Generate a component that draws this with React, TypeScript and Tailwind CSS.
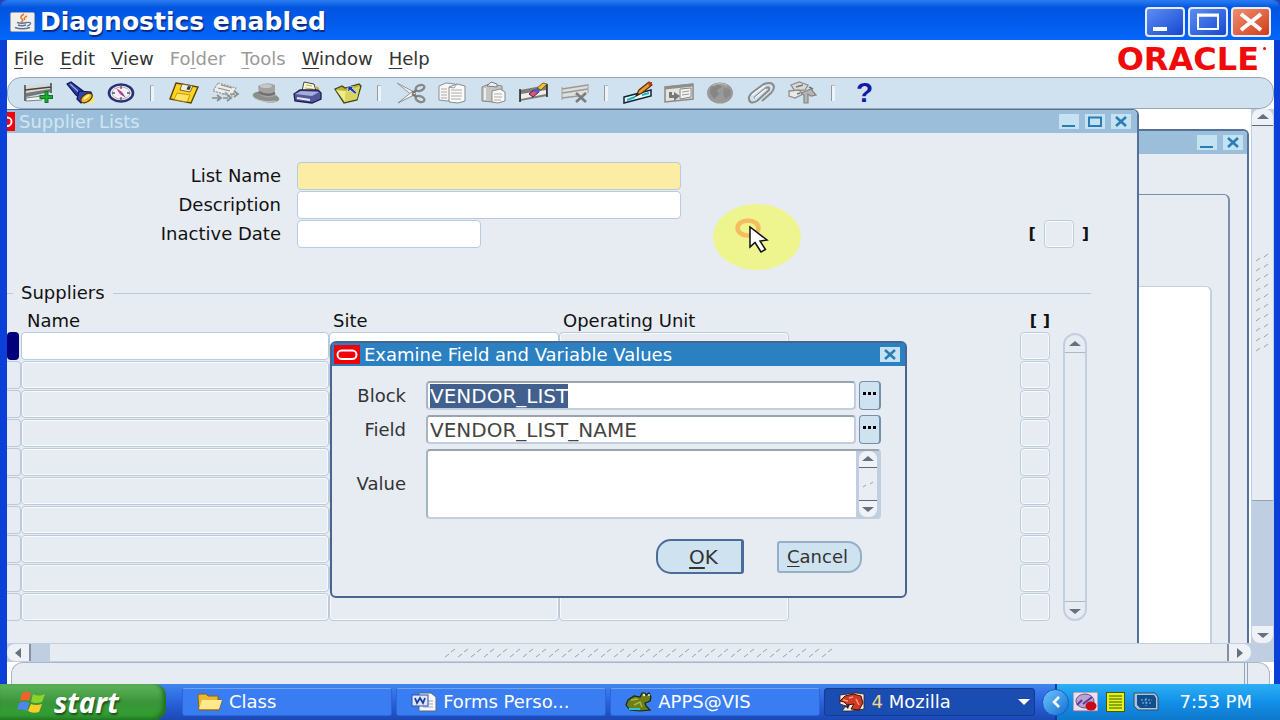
import { useEffect, useRef, type ReactNode } from "react";

const MENUS = [
  { label: "File", key: 0 },
  { label: "Edit", key: 0 },
  { label: "View", key: 0 },
  { label: "Folder", key: 2, disabled: true },
  { label: "Tools", key: 0, disabled: true },
  { label: "Window", key: 0 },
  { label: "Help", key: 0 },
];

const ROWS = Array.from({ length: 10 }, (_, i) => i);

function Mnemonic({ text, at = 0 }: { text: string; at?: number }) {
  return (
    <>
      {text.slice(0, at)}
      <span className="underline underline-offset-3">{text[at]}</span>
      {text.slice(at + 1)}
    </>
  );
}

function Glyph({ children }: { children: ReactNode }) {
  return (
    <svg className="h-6 w-[30px]" viewBox="0 0 30 24" fill="none" aria-hidden>
      {children}
    </svg>
  );
}

const NewIcon = () => (
  <Glyph>
    <path d="M1 5L27 2V11L1 14Z" fill="#d8d8d4" />
    <path d="M1 4V20M27 2V12M1 9L27 6" stroke="#444" strokeWidth="1.5" />
    <path d="M2 12L26 8V11L2 16Z" fill="#777" />
    <path d="M2 17L18 15V19L2 20Z" fill="#f4f4f0" stroke="#666" strokeWidth="0.8" />
    <path d="M22.500 10V22M15.500 16H29" stroke="#0b7a1c" strokeWidth="4" />
    <path d="M22.500 11V21M16.500 16H28" stroke="#1fa832" strokeWidth="2" />
  </Glyph>
);

const FindIcon = () => (
  <Glyph>
    <path d="M22 20L29 15V21L24 23Z" fill="#ffe95a" />
    <path d="M2 3L6 1L18 10L14 16L11 14Z" fill="#2b3fa8" stroke="#101850" strokeWidth="1.2" />
    <path d="M5 3L15 12" stroke="#8ea4ee" strokeWidth="1.5" />
    <path d="M14 10L26 11L27 14L16 22L12 18Z" fill="#2f45b4" stroke="#101850" strokeWidth="1.2" />
    <ellipse cx="21.500" cy="17" rx="6.500" ry="3.800" transform="rotate(-35 21.500 17)" fill="#f2b92d" stroke="#4a3408" strokeWidth="1.2" />
    <path d="M19 18L24 14" stroke="#fff2a8" strokeWidth="2" />
  </Glyph>
);

const NavigatorIcon = () => (
  <Glyph>
    <ellipse cx="15" cy="12" rx="12" ry="8.500" fill="#f4f3fa" stroke="#2c2f78" strokeWidth="2.600" />
    <ellipse cx="15" cy="12" rx="9" ry="6" stroke="#b9a9a4" strokeWidth="1" />
    <path d="M15 5V8M15 16V19M6 12H9M21 12H24" stroke="#555" strokeWidth="1.300" />
    <path d="M10 7L16 11L14 13Z" fill="#e0227c" />
    <path d="M20 17L16 11L14 13Z" fill="#8f3a8c" />
  </Glyph>
);

const SaveIcon = () => (
  <Glyph>
    <path d="M7 2L29 6L22 22L1 18Z" fill="#ffd21e" stroke="#57430a" strokeWidth="1.400" />
    <path d="M13 3L24 5L21 11L11 9Z" fill="#f0efe4" stroke="#6b5a20" strokeWidth="0.900" />
    <path d="M19 5L22 5.500L20.500 9L17.500 8.500Z" fill="#3c3a30" />
    <path d="M8 12L21 14L18 21L5 18.500Z" fill="#ffe465" stroke="#b58a10" strokeWidth="0.800" />
  </Glyph>
);

const NextStepIcon = () => (
  <Glyph>
    <path d="M8 2L26 7L22 15L3 10Z" fill="#eeeeec" stroke="#9a9a98" strokeWidth="1.200" strokeDasharray="2 1" />
    <path d="M8 7L20 10M11 4L22 7" stroke="#8b8b8b" strokeWidth="1.200" />
    <path d="M2 17H9M7 14L11 17L7 20M13 17H18M17 14L21 17L17 20M20 13H25M24 10L28 13L24 16" stroke="#8d8d8d" strokeWidth="1.700" />
    <path d="M12 13H17M15 11L18 13" stroke="#a5a5a5" strokeWidth="1.500" />
  </Glyph>
);

const HatIcon = () => (
  <Glyph>
    <ellipse cx="15" cy="16" rx="13.500" ry="5" transform="rotate(10 15 16)" fill="#8d8d8b" />
    <path d="M8 13L7 5Q15 0 24 4L24 15Q15 19 8 13Z" fill="#a3a3a1" />
    <path d="M8 11Q16 16 24 12" stroke="#6f6f6f" strokeWidth="2.500" />
    <ellipse cx="15" cy="5" rx="6" ry="2" fill="#c6c6c4" />
    <path d="M3 17Q12 22 25 20" stroke="#c4c4c2" />
  </Glyph>
);

const PrintIcon = () => (
  <Glyph>
    <path d="M10 10L12 1L22 3L24 10Z" fill="#fbfae0" stroke="#444" />
    <path d="M14 4L20 5M13 7L21 8" stroke="#c8b040" />
    <path d="M2 13L8 9L26 9L29 12V18L20 22L3 20Z" fill="#54589a" stroke="#1b1d50" strokeWidth="1.300" />
    <path d="M3 13L9 10L27 11L20 15Z" fill="#a8acdc" />
    <path d="M5 17L18 19" stroke="#e8e8f8" strokeWidth="2" />
    <path d="M24 6L27 8" stroke="#d8b020" strokeWidth="2" />
  </Glyph>
);

const CloseFormIcon = () => (
  <Glyph>
    <path d="M2 8L9 5L12 7L26 3L28 5L24 19L11 22Z" fill="#b8b43e" stroke="#45441a" strokeWidth="1.300" />
    <path d="M3 9L13 10L12 21Z" fill="#f0ec8a" />
    <path d="M13 10L27 5L24 18L12 21Z" fill="#d9d462" />
    <path d="M15 5L21 6L19 7L24 12L22 13L17 9L15 11Z" fill="#1534b8" stroke="#fff" strokeWidth="0.500" />
  </Glyph>
);

const CutIcon = () => (
  <Glyph>
    <path d="M1 2L20 12L17 15Z" fill="#f2f2f0" stroke="#999" />
    <path d="M2 22L17 10L20 13Z" fill="#fafafa" stroke="#8e8e8e" />
    <ellipse cx="24" cy="7" rx="4.500" ry="2.700" transform="rotate(-20 24 7)" stroke="#888" strokeWidth="2.400" />
    <ellipse cx="24" cy="18" rx="4.500" ry="2.700" transform="rotate(20 24 18)" stroke="#888" strokeWidth="2.400" />
    <path d="M16 13L21 16M16 12L21 9" stroke="#777" strokeWidth="2.500" />
  </Glyph>
);

const CopyIcon = () => (
  <Glyph>
    <path d="M2 5L9 2L18 3V18L10 20L2 19Z" fill="#f6f6f4" stroke="#8f8f8f" />
    <path d="M12 6L20 3L28 5V20L21 22L12 21Z" fill="#fbfbf9" stroke="#8a8a8a" />
    <path d="M4 8H10M4 11H10M4 14H10M4 17H10M14 9H25M14 12H25M14 15H25M14 18H24" stroke="#aaa" />
    <path d="M12 6L17 7L20 3" stroke="#999" />
  </Glyph>
);

const PasteIcon = () => (
  <Glyph>
    <path d="M4 6L11 3L24 5V19L15 21L4 20Z" fill="#c5c5c3" stroke="#888" />
    <path d="M9 5L13 1L19 3L19 6Z" fill="#eee" stroke="#7f7f7f" />
    <path d="M14 10L22 8L27 11V20L20 22L14 21Z" fill="#fafaf8" stroke="#888" />
    <path d="M16 13H24M16 16H24M16 19H23" stroke="#aaa" />
    <path d="M7 7V19" stroke="#eee" strokeWidth="2" />
  </Glyph>
);

const ClearIcon = () => (
  <Glyph>
    <path d="M1 9L28 4V15L1 20Z" fill="#7d7d7a" />
    <path d="M2 13L27 9V13L2 18Z" fill="#efefea" />
    <path d="M1 8V21M28 3V16" stroke="#222" strokeWidth="1.500" />
    <path d="M10 13L15 9L20 11L14 16Z" fill="#e0507c" stroke="#47204a" />
    <path d="M14 10L18 7L22 9L19 12Z" fill="#4a5dc8" />
    <path d="M18 7L24 2L28 3L22 9Z" fill="#f4c030" stroke="#6b4a08" strokeWidth="0.800" />
  </Glyph>
);

const DeleteIcon = () => (
  <Glyph>
    <path d="M2 7L28 3V14L2 18Z" fill="#dededc" />
    <path d="M2 8L28 4M2 12L28 8M2 17L18 15" stroke="#999" strokeWidth="1.500" />
    <path d="M2 6V19M28 3V12" stroke="#a0a0a0" />
    <path d="M16 12L26 21M26 12L16 21" stroke="#7c7c7c" strokeWidth="2.600" />
  </Glyph>
);

const EditIcon = () => (
  <Glyph>
    <path d="M1 16L28 9V15L1 22Z" fill="#eaf8fa" stroke="#123" strokeWidth="1.500" />
    <path d="M4 19L12 16M19 14L26 12" stroke="#18b4c8" strokeWidth="2" />
    <path d="M13 15L16 9L26 1L29 4L19 12Z" fill="#f09a28" stroke="#5b2c08" strokeWidth="1.200" />
    <path d="M25 1L29 1L29 4L26 5Z" fill="#b83a18" />
    <path d="M12 16L14 12L17 13Z" fill="#222" />
  </Glyph>
);

const ZoomIcon = () => (
  <Glyph>
    <path d="M1 6L29 3V18L1 21Z" fill="#e4e4e1" stroke="#8a8a88" strokeWidth="1.500" />
    <path d="M1 7L29 4" stroke="#8e8e8c" strokeWidth="3" />
    <path d="M16 8L27 7V16L16 18Z" fill="#f3f3f0" stroke="#888" />
    <path d="M18 11L25 10M18 14L25 13" stroke="#999" />
    <path d="M5 11V17H10V20L16 15L10 11V14H8V11Z" fill="#777" />
  </Glyph>
);

const GlobeIcon = () => (
  <Glyph>
    <ellipse cx="15" cy="12" rx="13" ry="10.500" fill="#999997" />
    <path d="M6 6L13 3L17 6L12 9L14 13L9 18L5 12Z" fill="#868685" />
    <path d="M19 7L25 8L26 14L20 18L18 12Z" fill="#8a8a89" />
    <path d="M8 5Q15 0 22 5" stroke="#c0c0be" />
  </Glyph>
);

const AttachIcon = () => (
  <Glyph>
    <path
      d="M8 17L20 7Q24 5 23 9L11 20Q4 24 3 18Q2 15 7 11L18 3Q27 0 28 6Q28 9 25 12L16 20"
      stroke="#8b8b89"
      strokeWidth="2"
    />
    <path d="M9 17L20 8M6 14L18 5" stroke="#fff" strokeWidth="1.200" />
  </Glyph>
);

const FolderToolsIcon = () => (
  <Glyph>
    <path d="M4 4L12 1L21 4L18 9L8 10Z" fill="#d9d9d7" stroke="#8d8d8b" strokeWidth="1.300" />
    <path d="M2 10L12 9L16 13L8 17L2 15Z" fill="#e9e9e7" stroke="#8e8e8c" strokeWidth="1.300" />
    <path d="M14 12L24 8L29 14L24 15L21 13V22H17V14Z" fill="#b5b5b3" stroke="#858583" strokeWidth="1.200" />
    <path d="M9 6L16 4M10 13L13 12M22 6L26 8" stroke="#777" strokeWidth="1.500" />
  </Glyph>
);

const TOOL_GROUPS: { name: string; icon: () => ReactNode }[][] = [
  [
    { name: "New", icon: NewIcon },
    { name: "Find", icon: FindIcon },
    { name: "Show Navigator", icon: NavigatorIcon },
  ],
  [
    { name: "Save", icon: SaveIcon },
    { name: "Next Step", icon: NextStepIcon },
    { name: "Switch Responsibility", icon: HatIcon },
    { name: "Print", icon: PrintIcon },
    { name: "Close Form", icon: CloseFormIcon },
  ],
  [
    { name: "Cut", icon: CutIcon },
    { name: "Copy", icon: CopyIcon },
    { name: "Paste", icon: PasteIcon },
    { name: "Clear Record", icon: ClearIcon },
    { name: "Delete", icon: DeleteIcon },
  ],
  [
    { name: "Edit Field", icon: EditIcon },
    { name: "Zoom", icon: ZoomIcon },
    { name: "Translations", icon: GlobeIcon },
    { name: "Attachments", icon: AttachIcon },
    { name: "Folder Tools", icon: FolderToolsIcon },
  ],
];

function JavaIcon() {
  return (
    <svg className="h-5 w-[25px]" viewBox="0 0 25 20" fill="none" aria-hidden>
      <rect x="0.500" y="0.500" width="24" height="19" rx="1.500" fill="#f0efec" stroke="#a5a7b0" />
      <path d="M14 2Q9 5 12 7Q14 9 11 10M17 4Q13 6 15 8" stroke="#e8792b" strokeWidth="1.600" />
      <path d="M7 10.500Q12 12 17 10.500M8 13Q12 14.500 16 13M5 15.500Q12 18 20 15.500" stroke="#5b7396" strokeWidth="1.400" />
      <path d="M17 10.500Q22 10 20 12.500Q18 14 17 14" stroke="#5b7396" strokeWidth="1.200" />
    </svg>
  );
}

function OracleBadge() {
  return (
    <svg className="h-[19px] w-[26px] shrink-0" viewBox="0 0 26 19" aria-hidden>
      <rect width="26" height="19" fill="#f30008" />
      <rect x="3.500" y="5.500" width="19" height="8.500" rx="4.200" fill="none" stroke="#fff" strokeWidth="2" />
    </svg>
  );
}

function Arrow({ dir }: { dir: "up" | "down" | "left" | "right" }) {
  const d = {
    up: "M0 8L6 3L12 8Z",
    down: "M0 4L6 9L12 4Z",
    left: "M9 1V11L3 6Z",
    right: "M3 1V11L9 6Z",
  }[dir];
  return (
    <svg className="h-3 w-3" viewBox="0 0 12 12" fill="#66707f" aria-hidden>
      <path d={d} />
    </svg>
  );
}

type WinAction = "Minimize" | "Maximize" | "Close";

function InnerButton({ action }: { action: WinAction }) {
  return (
    <button type="button" aria-label={action} className="grid h-[15px] w-5 place-items-center bg-[#c5e2f2]">
      <svg className="h-[13px] w-4" viewBox="0 0 16 13" fill="none" stroke="#2a7cb4" strokeWidth="2" aria-hidden>
        {action === "Minimize" && <path d="M1 11H14" />}
        {action === "Maximize" && <path d="M2 2.500H14V11H2Z" />}
        {action === "Close" && <path d="M3 2L13 11M13 2L3 11" strokeWidth="2.500" />}
      </svg>
    </button>
  );
}

function FrameButton({ action }: { action: WinAction }) {
  return (
    <button
      type="button"
      aria-label={action}
      className={`grid h-[30px] w-10 place-items-center rounded border-2 border-[#e6ecfb] bg-gradient-to-br ${
        action === "Close" ? "from-[#ee8e6c] to-[#cf3a10]" : "from-[#5d8df3] to-[#1746d0]"
      }`}
    >
      <svg className="h-6 w-9" viewBox="0 0 36 24" fill="none" stroke="#fff" aria-hidden>
        {action === "Minimize" && <path d="M6 19H20" strokeWidth="4" />}
        {action === "Maximize" && (
          <>
            <path d="M8 5.500H28V19H8Z" strokeWidth="2" />
            <path d="M7 5H29" strokeWidth="3" />
          </>
        )}
        {action === "Close" && <path d="M8 4L28 20M28 4L8 20" strokeWidth="4" />}
      </svg>
    </button>
  );
}

function TitleBar() {
  return (
    <header className="flex h-10 shrink-0 items-center justify-between rounded-t-lg bg-gradient-to-b from-[#2a7cf2] via-[#0054e0] via-20% to-[#0566fb] pt-1 pr-[9px] pl-[10px]">
      <h1 className="flex items-center gap-[5px] font-['DejaVu_Sans',sans-serif] text-[25px] leading-8 font-bold text-white [text-shadow:1px_2px_1px_#0a2a80]">
        <JavaIcon />
        Diagnostics enabled
      </h1>
      <div className="flex gap-[3px]">
        <FrameButton action="Minimize" />
        <FrameButton action="Maximize" />
        <FrameButton action="Close" />
      </div>
    </header>
  );
}

function MenuBar() {
  return (
    <div className="flex h-[37px] shrink-0 items-center justify-between pr-2 pl-[7px]">
      <nav className="flex gap-4">
        {MENUS.map((m) => (
          <button
            key={m.label}
            type="button"
            disabled={m.disabled}
            className="text-[#333] disabled:text-[#9a9a9a]"
          >
            <Mnemonic text={m.label} at={m.key} />
          </button>
        ))}
      </nav>
      <div className="flex items-start font-['DejaVu_Sans',sans-serif] text-[32px] leading-8 font-bold text-[#f00a0a]">
        ORACLE
        <span className="mt-1 ml-1 size-[3px] rounded-full bg-[#f00a0a]" />
      </div>
    </div>
  );
}

function ToolSeparator() {
  return <span className="mx-[9px] h-4 w-1 border-t border-l border-[#999] border-t-[#bbb] bg-white/60" />;
}

function ToolBar() {
  return (
    <div className="flex h-8 shrink-0 items-center rounded-[14px] border border-[#98a6b4] bg-[#d0e2f0] pl-[10px]">
      {TOOL_GROUPS.map((group, i) => (
        <div key={i} className="flex items-center">
          {group.map(({ name, icon: Icon }) => (
            <button key={name} type="button" aria-label={name} className="grid w-[41px] place-items-center">
              <Icon />
            </button>
          ))}
          <ToolSeparator />
        </div>
      ))}
      <button
        type="button"
        className="w-[41px] text-center font-['Liberation_Sans',sans-serif] text-[28px] leading-7 font-bold text-[#1418a4]"
      >
        ?
      </button>
    </div>
  );
}

const fieldBox = "rounded border border-[#b8cade] bg-white outline-none";
const idleBox =
  "rounded border border-[#bccbdc] bg-[#e7ecf3] shadow-[inset_0_0_0_1px_#f8fbfd] outline-none";

function CheckBox({ label }: { label: string }) {
  return <input type="checkbox" aria-label={label} className={`block h-7 w-[30px] appearance-none ${idleBox}`} />;
}

function HeaderForm() {
  return (
    <div className="flex items-end justify-between pt-[29px] pr-12">
      <div className="grid grid-cols-[274px_1fr] items-center gap-x-4 gap-y-px">
        <label htmlFor="list-name" className="text-right">
          List Name
        </label>
        <input id="list-name" className="h-7 w-[384px] rounded border border-[#b8cade] bg-[#fbeda4] px-1 outline-none" />
        <label htmlFor="description" className="text-right">
          Description
        </label>
        <input id="description" className={`h-7 w-[384px] px-1 ${fieldBox}`} />
        <label htmlFor="inactive" className="text-right">
          Inactive Date
        </label>
        <input id="inactive" className={`h-7 w-[184px] px-1 ${fieldBox}`} />
      </div>
      <div className="flex items-center gap-2 text-base font-bold">
        <span>[</span>
        <CheckBox label="Flexfield" />
        <span>]</span>
      </div>
    </div>
  );
}

function SupplierGrid() {
  return (
    <div className="flex items-end pr-[50px]">
      <table className="h-[310px] flex-1 border-collapse">
        <thead>
          <tr className="h-5 text-left leading-5">
            <td className="w-[14px]" />
            <th className="w-[308px] pl-[6px] font-normal">Name</th>
            <th className="w-[230px] pl-1 font-normal">Site</th>
            <th className="w-[230px] pl-1 font-normal">Operating Unit</th>
            <td />
            <th className="w-[30px] text-right text-base leading-5 font-bold whitespace-nowrap">[ ]</th>
          </tr>
        </thead>
        <tbody>
          {ROWS.map((r) => (
            <tr key={r}>
              <td className="p-0">
                <div
                  className={
                    r === 0
                      ? "h-7 w-3 rounded bg-[#00007c]"
                      : "h-7 w-[14px] rounded-r border border-l-0 border-[#bccbdc]"
                  }
                />
              </td>
              {["Name", "Site", "Operating Unit"].map((col) => (
                <td key={col} className="p-0">
                  <input
                    aria-label={`${col} ${r + 1}`}
                    className={`block h-7 w-full px-1 ${r === 0 && col !== "Operating Unit" ? fieldBox : idleBox}`}
                  />
                </td>
              ))}
              <td />
              <td className="p-0">
                <CheckBox label={`Line flexfield ${r + 1}`} />
              </td>
            </tr>
          ))}
        </tbody>
      </table>
      <div className="ml-[13px] flex h-[288px] w-6 flex-col items-center justify-between rounded-full border-2 border-[#c3cfde]">
        <button type="button" aria-label="Previous record" className="grid h-[18px] w-5 place-items-center border-b border-[#aeb9c8]">
          <Arrow dir="up" />
        </button>
        <button type="button" aria-label="Next record" className="grid h-[18px] w-5 place-items-center border-t border-[#aeb9c8]">
          <Arrow dir="down" />
        </button>
      </div>
    </div>
  );
}

function SupplierWindow() {
  return (
    <section className="absolute inset-y-0 right-[112px] left-0 overflow-hidden rounded-tr-md border-t border-r-2 border-[#54719a] bg-[#e7ecf3]">
      <div className="flex h-[23px] items-center justify-between bg-[#9bbfdb] pr-[6px]">
        <h2 className="flex items-center gap-1 text-[#d3e5f2]">
          <span className="flex w-2 justify-end overflow-hidden">
            <OracleBadge />
          </span>
          Supplier Lists
        </h2>
        <div className="flex gap-[6px]">
          <InnerButton action="Minimize" />
          <InnerButton action="Maximize" />
          <InnerButton action="Close" />
        </div>
      </div>
      <HeaderForm />
      <div className="mt-[33px] flex items-center gap-2 pr-[46px] leading-6">
        <span className="h-px w-[6px] bg-[#b8cade]" />
        <h3>Suppliers</h3>
        <span className="h-px flex-1 bg-[#b8cade]" />
      </div>
      <div className="mt-[6px]">
        <SupplierGrid />
      </div>
    </section>
  );
}

function BackWindow() {
  return (
    <section className="absolute top-[20px] right-[2px] bottom-0 left-16 flex flex-col rounded-tr-md border-t-2 border-r-2 border-[#54719a] bg-[#e7ecf3]">
      <div className="flex h-[23px] shrink-0 items-center justify-end gap-[6px] rounded-tr bg-[#9bbfdb] pr-1">
        <InnerButton action="Minimize" />
        <InnerButton action="Close" />
      </div>
      <div className="mt-10 mr-[17px] flex-1 rounded-tr-md border-t border-r-2 border-[#7890ac] pt-[91px] pr-4">
        <div className="h-full rounded-tr-md border-t border-r-2 border-[#c3d0df] bg-white" />
      </div>
    </section>
  );
}

function LovRow({ id, label, children }: { id: string; label: string; children: ReactNode }) {
  return (
    <>
      <label htmlFor={id} className="text-right text-[#333]">
        {label}
      </label>
      {children}
      <button
        type="button"
        aria-label={`List of values for ${label}`}
        className="grid h-[29px] w-[22px] place-items-center rounded border border-r-2 border-[#7590ae] bg-[#cfe2f0]"
      >
        <span className="flex gap-[2px] pb-1">
          <i className="size-[3px] bg-black" />
          <i className="size-[3px] bg-black" />
          <i className="size-[3px] bg-black" />
        </span>
      </button>
    </>
  );
}

const dialogField =
  "h-[29px] w-full rounded border-2 border-[#c0cedd] border-t-[#99a4b0] border-l-[#a8b4c2] bg-white px-[2px] text-xl leading-6 text-[#444] outline-none selection:bg-[#41608d] selection:text-white";

function ExamineDialog() {
  const blockRef = useRef<HTMLInputElement>(null);

  useEffect(() => {
    blockRef.current?.focus();
    blockRef.current?.select();
  }, []);

  return (
    <section
      role="dialog"
      aria-labelledby="examine-title"
      className="absolute top-[232px] left-[323px] w-[577px] rounded-md border-2 border-[#48658f] bg-[#e7ecf3] pb-[22px]"
    >
      <div className="flex h-[23px] items-center justify-between bg-[#2a80c1] pr-[5px] pl-[2px]">
        <h2 id="examine-title" className="flex items-center gap-1 text-white">
          <OracleBadge />
          Examine Field and Variable Values
        </h2>
        <InnerButton action="Close" />
      </div>
      <div className="grid grid-cols-[74px_430px_22px] items-center gap-y-[5px] pt-[15px] [column-gap:0px]">
        <div className="contents [&>input]:ml-5 [&>button]:ml-[23px]">
          <LovRow id="block" label="Block">
            <input id="block" ref={blockRef} defaultValue="VENDOR_LIST" className={dialogField} />
          </LovRow>
          <LovRow id="field" label="Field">
            <input id="field" defaultValue="VENDOR_LIST_NAME" className={dialogField} />
          </LovRow>
        </div>
        <label htmlFor="value" className="text-right text-[#333]">
          Value
        </label>
        <div className="col-span-2 ml-5 flex h-[70px] w-[455px] rounded border-2 border-[#c0cedd] border-t-[#99a4b0] border-l-[#a8b4c2] bg-white">
          <textarea id="value" className="flex-1 resize-none px-1 outline-none" />
          <div className="flex w-[23px] flex-col items-center bg-[#bfcfe0]">
            <button type="button" aria-label="Scroll up" className="grid h-[17px] w-[18px] place-items-center rounded-t-lg border-b border-[#667] bg-[#eef3f8]">
              <Arrow dir="up" />
            </button>
            <span className="grid w-[18px] flex-1 place-items-center bg-[#e9eef4] text-[#9aa]">
              <svg className="h-2 w-3" viewBox="0 0 12 8" stroke="#98a2ae" aria-hidden>
                <path d="M1 7L4 5M8 4L11 2" />
              </svg>
            </span>
            <button type="button" aria-label="Scroll down" className="grid h-[17px] w-[18px] place-items-center rounded-b-lg border-t border-[#667] bg-[#eef3f8]">
              <Arrow dir="down" />
            </button>
          </div>
        </div>
      </div>
      <div className="mt-5 mr-[43px] flex items-center justify-end gap-[33px] text-[#333]">
        <button
          type="button"
          className="h-[35px] w-[88px] rounded-l-[15px] rounded-r-[3px] border-2 border-r-3 border-[#4d6b98] bg-[#cfe2f0] pl-2 text-xl"
        >
          <Mnemonic text="OK" />
        </button>
        <button
          type="button"
          className="h-8 w-[85px] rounded-l-[3px] rounded-r-[14px] border-2 border-[#95afc6] bg-[#cfe2f0] pr-1"
        >
          <Mnemonic text="Cancel" />
        </button>
      </div>
    </section>
  );
}

function PointerHalo() {
  return (
    <svg className="pointer-events-none absolute top-[94px] left-[705px] h-[68px] w-[90px]" viewBox="0 0 90 68" aria-hidden>
      <ellipse cx="45" cy="34" rx="44" ry="33" fill="#eef48e" />
      <ellipse cx="36" cy="25" rx="10.500" ry="7.500" fill="none" stroke="#f6bc60" strokeWidth="4.500" />
      <path d="M38 24V44L43 39.500L49 49L53.500 46.500L48 38L55 37Z" fill="#fff" stroke="#111" strokeWidth="1.500" />
    </svg>
  );
}

function Grip({ vertical }: { vertical?: boolean }) {
  const dots = Array.from({ length: vertical ? 20 : 60 }, (_, i) => i);
  return (
    <svg className={vertical ? "h-[102px] w-4" : "h-[10px] w-[390px]"} stroke="#98a1ad" aria-hidden>
      {dots.map((i) => {
        const x = vertical ? (i % 2 ? 9 : 1) : 1 + Math.floor(i / 2) * 13 + (i % 2 ? 6 : 0);
        const y = vertical ? 2 + (i >> 1) * 10 + (i % 2 ? 0 : 4) : i % 2 ? 1 : 6;
        return <path key={i} d={`M${x} ${y + 3}L${x + 4} ${y}`} />;
      })}
    </svg>
  );
}

function VerticalScroll() {
  return (
    <div className="flex w-[23px] flex-col items-center bg-[#bfcfe1] px-px">
      <button type="button" aria-label="Scroll up" className="grid h-[17px] w-full place-items-center rounded-t-lg border-b border-[#667] bg-[#eef2f7]">
        <Arrow dir="up" />
      </button>
      <div className="flex w-full flex-[370] items-center justify-center border-b border-[#8fa3b8] bg-[#e7ecf3] pb-5">
        <Grip vertical />
      </div>
      <div className="flex-[130]" />
      <button type="button" aria-label="Scroll down" className="grid h-[17px] w-full place-items-center rounded-b-lg bg-[#eef2f7]">
        <Arrow dir="down" />
      </button>
    </div>
  );
}

function HorizontalScroll() {
  return (
    <div className="flex h-[19px] shrink-0 border-y border-[#c3cfe0] bg-[#bfcfe1] pr-[23px]">
      <button type="button" aria-label="Scroll left" className="grid w-6 place-items-center rounded-l-lg border-r-2 border-[#8890a0] bg-[#eef2f7]">
        <Arrow dir="left" />
      </button>
      <div className="w-[19px]" />
      <div className="grid flex-1 place-items-center bg-[#e7ecf3]">
        <Grip />
      </div>
      <button type="button" aria-label="Scroll right" className="grid w-6 place-items-center rounded-r-lg border-l-2 border-[#8890a0] bg-[#eef2f7]">
        <Arrow dir="right" />
      </button>
    </div>
  );
}

function FlagIcon() {
  return (
    <svg className="h-6 w-[30px]" viewBox="0 0 30 24" aria-hidden>
      <path d="M6 3Q11 0 15 3L13 11Q9 9 4 11Z" fill="#f0622a" />
      <path d="M17 4Q22 7 29 4L26 12Q20 14 15 12Z" fill="#8bd32c" />
      <path d="M3 13Q8 10 13 13L11 21Q6 18 1 20Z" fill="#4f86ee" />
      <path d="M15 14Q20 16 26 14L23 22Q17 24 12 21Z" fill="#fbce27" />
    </svg>
  );
}

function FolderIcon() {
  return (
    <svg className="h-5 w-[26px]" viewBox="0 0 26 20" aria-hidden>
      <path d="M1 4Q1 2 3 2H9L11 4H21V8H25L22 18H2Z" fill="#e9b934" stroke="#8b6310" />
      <path d="M5 8H25L22 17H2Z" fill="#ffe98e" />
    </svg>
  );
}

function WordIcon() {
  return (
    <svg className="h-5 w-[26px]" viewBox="0 0 26 20" fill="none" aria-hidden>
      <path d="M8 1H20L25 5V19H8Z" fill="#f5f7fc" stroke="#59667e" />
      <path d="M12 9H22M12 12H22M12 15H22" stroke="#9aa7c4" />
      <rect x="1" y="3" width="16" height="11" fill="#dfe8fa" stroke="#2c4fa8" />
      <path d="M4 6L6 11L9 6L12 11L14 6" stroke="#1b3d9c" strokeWidth="1.800" />
    </svg>
  );
}

function FrogIcon() {
  return (
    <svg className="h-5 w-[27px]" viewBox="0 0 27 20" aria-hidden>
      <path d="M3 8L9 4L15 5L17 1L20 1L21 3L24 1L26 5L25 9L20 11L21 14L25 18L15 19L5 18L1 13Z" fill="#6b7e1c" stroke="#1c2806" strokeWidth="1.200" />
      <path d="M6 8L13 7M9 13L15 10L17 15" stroke="#a9ba38" strokeWidth="1.500" fill="none" />
      <path d="M4 17H15" stroke="#2cc4d0" strokeWidth="2" />
      <circle cx="19" cy="3" r="1.200" fill="#eee" />
      <circle cx="24" cy="3" r="1" fill="#eee" />
    </svg>
  );
}

function MozillaIcon() {
  return (
    <svg className="h-5 w-[26px]" viewBox="0 0 26 20" aria-hidden>
      <path d="M1 3L17 1L25 2V17L12 19L3 19L7 14L1 12Z" fill="#f4ece8" stroke="#321" strokeWidth="0.800" />
      <path d="M1 9L6 4L14 2L22 4L24 11L20 18L12 17L15 12L8 13L5 10Z" fill="#cf3a22" stroke="#4c0d06" />
      <path d="M10 6L14 5M4 8L9 9M17 7L20 13" stroke="#ff9a78" strokeWidth="1.500" />
      <path d="M6 14L11 12L9 17Z" fill="#222" />
    </svg>
  );
}

function TaskButton({ icon, children, active }: { icon: ReactNode; children: ReactNode; active?: boolean }) {
  return (
    <button
      type="button"
      className={`flex h-7 flex-1 items-center gap-[6px] rounded-[3px] border pl-[14px] whitespace-nowrap text-white ${
        active ? "border-[#113c92] bg-[#1a4cb2]" : "border-[#2c66d8] border-t-[#6fa3fa] bg-[#3a7df2]"
      }`}
    >
      {icon}
      {children}
    </button>
  );
}

function Taskbar() {
  return (
    <footer className="relative flex h-9 shrink-0 items-center bg-gradient-to-b from-[#3f86ee] via-[#2a62dc] to-[#1c48b4]">
      <button
        type="button"
        className="mr-4 flex h-9 w-[166px] items-center gap-2 rounded-r-xl bg-gradient-to-b from-[#5fb45c] via-[#3b953a] to-[#2fa02f] pl-4 font-['Noto_Sans',sans-serif] text-[28px] leading-8 font-bold text-white italic shadow-[inset_-3px_-2px_4px_#1f6e20] [text-shadow:1px_2px_2px_#1b4a1b]"
      >
        <FlagIcon />
        start
      </button>
      <div className="flex flex-1 gap-1">
        <TaskButton icon={<FolderIcon />}>Class</TaskButton>
        <TaskButton icon={<WordIcon />}>Forms Perso...</TaskButton>
        <TaskButton icon={<FrogIcon />}>APPS@VIS</TaskButton>
        <TaskButton icon={<MozillaIcon />} active>
          <span className="text-[#f2d68a]">4</span>
          <span className="flex-1 text-left">Mozilla</span>
          <svg className="mr-1 h-2 w-3" viewBox="0 0 12 8" fill="#fff" aria-hidden>
            <path d="M0 1H12L6 7Z" />
          </svg>
        </TaskButton>
      </div>
      <div className="ml-[21px] flex h-9 items-center gap-1 border-l-2 border-[#0a3c9c] bg-gradient-to-b from-[#2cb0f6] via-[#1290e8] to-[#0f78cc] pr-7">
        <button
          type="button"
          aria-label="Show hidden icons"
          className="-ml-[15px] grid size-[27px] place-items-center rounded-full border border-[#1b5cc0] bg-gradient-to-br from-[#6cc4fa] to-[#0f6fd4]"
        >
          <svg className="h-3 w-3" viewBox="0 0 12 12" fill="none" stroke="#fff" strokeWidth="2.500" aria-hidden>
            <path d="M9 1L4 6L9 11" />
          </svg>
        </button>
        <svg className="h-5 w-[25px]" viewBox="0 0 25 20" aria-hidden>
          <rect width="25" height="19" fill="#e9dff0" stroke="#8a6a90" />
          <ellipse cx="12" cy="9" rx="9" ry="7" fill="#b9a4d4" stroke="#67587c" />
          <path d="M4 13L9 8M10 12L19 5" stroke="#5a3d98" strokeWidth="2" />
          <ellipse cx="18" cy="14" rx="5.500" ry="4.500" fill="#c80a18" />
        </svg>
        <svg className="mx-1 h-5 w-[19px]" viewBox="0 0 19 20" aria-hidden>
          <rect x="0.500" y="0.500" width="18" height="19" fill="#e9f019" stroke="#4a5a08" />
          <path d="M3 4H16M3 7H16M3 10H16M3 13H16M3 16H16" stroke="#6a9208" strokeWidth="1.300" />
        </svg>
        <svg className="h-5 w-[26px]" viewBox="0 0 26 20" aria-hidden>
          <path d="M1 1H22L25 5V18H5L1 14Z" fill="#a9c4d8" stroke="#2b4c70" />
          <path d="M4 3H21L23 6V16H7L4 13Z" fill="#0f4f8e" />
          <path d="M8 8H19M9 11H19M13 6V14" stroke="#8ac0e8" strokeDasharray="2 1.500" />
        </svg>
        <time className="pl-4 whitespace-nowrap text-white">7:53 PM</time>
      </div>
    </footer>
  );
}

export default function App() {
  return (
    <div className="flex h-screen flex-col overflow-hidden bg-[#2444b8] font-['DejaVu_Sans',sans-serif] text-lg leading-6 text-[#111]">
      <TitleBar />
      <main className="flex min-h-0 flex-1 flex-col border-r-6 border-l-7 border-[#0a3fd8] bg-white">
        <MenuBar />
        <ToolBar />
        <div className="flex min-h-0 flex-1">
          <div className="relative flex-1 overflow-hidden pr-1">
            <BackWindow />
            <SupplierWindow />
            <PointerHalo />
            <ExamineDialog />
          </div>
          <VerticalScroll />
        </div>
        <HorizontalScroll />
        <div className="flex h-[22px] shrink-0 pr-1 pl-1">
          <div className="flex flex-1 justify-end rounded-t-xl border border-b-0 border-[#a8b6c8] bg-[#e7ecf3] pr-[21px]">
            <span className="w-1 border-x border-[#93a3b8]" />
          </div>
        </div>
      </main>
      <Taskbar />
    </div>
  );
}
